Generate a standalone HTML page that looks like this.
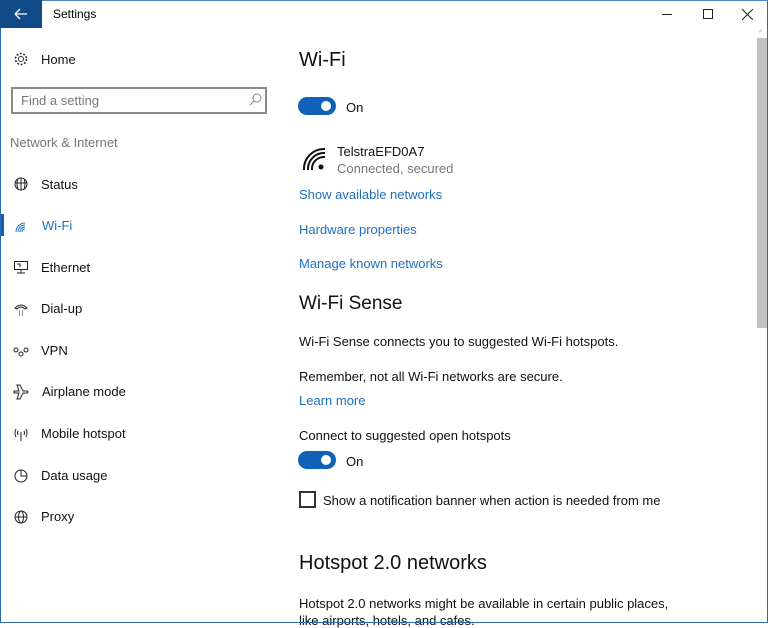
<!DOCTYPE html><html><head><style>
*{margin:0;padding:0;box-sizing:border-box}
body{width:768px;height:623px;overflow:hidden;background:#fff;font-family:"Liberation Sans",sans-serif;color:#000;position:relative}
.a{position:absolute;white-space:nowrap}
.nav{font-size:13px;color:#111}
.ic{position:absolute;left:13px;width:16px;height:16px}
.lnk{color:#1f6fbf;font-size:13px}
.t{font-size:13px;color:#111}
.tg{position:absolute;width:38px;height:18px;border-radius:9px;background:#0f62b8}
.tg:after{content:"";position:absolute;right:5px;top:4px;width:10px;height:10px;border-radius:50%;background:#fff}
</style></head><body>
<div class="a" style="left:0;top:0;width:1px;height:623px;background:#2b6cb0"></div>
<div class="a" style="right:0;top:0;width:1px;height:623px;background:#2b6cb0"></div>
<div class="a" style="left:0;bottom:0;width:768px;height:1px;background:#2b6cb0"></div>
<div class="a" style="left:0;top:0;width:768px;height:1px;background:#4a86c8"></div>
<div class="a" style="left:0;top:0;width:42px;height:28px;background:#104a87"></div>
<svg class="a" style="left:14px;top:8px" width="14" height="12"><path d="M1 6H13M1 6L6 1M1 6L6 11" stroke="#fff" stroke-width="1.3" fill="none"/></svg>
<div class="a" style="left:53px;top:7px;font-size:12px">Settings</div>
<div class="a" style="left:662px;top:14px;width:10px;height:1px;background:#222"></div>
<div class="a" style="left:703px;top:9px;width:10px;height:10px;border:1px solid #222"></div>
<svg class="a" style="left:742px;top:9px" width="11" height="11"><path d="M0 0L11 11M11 0L0 11" stroke="#222" stroke-width="1"/></svg>
<div class="a" style="left:757px;top:38px;width:10px;height:290px;background:#c2c2c2"></div>
<div class="a" style="left:759px;top:30px;font-size:7px;color:#999">^</div>

<svg class="ic" style="top:51px" viewBox="0 0 16 16"><circle cx="8" cy="8" r="2.5" fill="none" stroke="#333"/><circle cx="8" cy="8" r="5.5" fill="none" stroke="#333" stroke-dasharray="2 1.5" stroke-width="1.6"/></svg>
<div class="a nav" style="left:41px;top:52px">Home</div>
<div class="a" style="left:11px;top:87px;width:256px;height:27px;border:2px solid #8a8a8a"></div>
<div class="a" style="left:21px;top:93px;font-size:13px;color:#777">Find a setting</div>
<svg class="a" style="left:249px;top:93px" width="13" height="13"><circle cx="8" cy="5" r="4" fill="none" stroke="#888"/><path d="M5 8L1 12" stroke="#888"/></svg>
<div class="a" style="left:10px;top:135px;font-size:13px;color:#767676">Network &amp; Internet</div>

<svg class="ic" style="top:176px" viewBox="0 0 16 16"><circle cx="8" cy="8" r="6" fill="none" stroke="#222"/><path d="M2 7H14M8 2V14M5 3Q3 8 5 13M11 3Q13 8 11 13" stroke="#222" fill="none"/></svg>
<div class="a nav" style="left:41px;top:177px">Status</div>
<div class="a" style="left:1px;top:214px;width:3px;height:22px;background:#0f62b8"></div>
<svg class="ic" style="top:218px" viewBox="0 0 16 16"><path d="M3 14A9 9 0 0 1 12 5M5 14A7 7 0 0 1 12 7M7 14A5 5 0 0 1 12 9M9 14A3 3 0 0 1 12 11" stroke="#1f6fbf" fill="none"/></svg>
<div class="a nav" style="left:42px;top:218px;color:#1f6fbf">Wi-Fi</div>
<svg class="ic" style="top:259px" viewBox="0 0 16 16"><rect x="1.5" y="2.5" width="13" height="8" fill="none" stroke="#222"/><path d="M4 5H7V8M8 11V14M4 14H12" stroke="#222" fill="none"/></svg>
<div class="a nav" style="left:41px;top:260px">Ethernet</div>
<svg class="ic" style="top:301px" viewBox="0 0 16 16"><path d="M2 7Q8 1 14 7L12 8Q8 4 4 8Z" fill="none" stroke="#222"/><path d="M6 10h1M9 10h1M6 12h1M9 12h1M6 14h1M9 14h1" stroke="#222"/></svg>
<div class="a nav" style="left:41px;top:301px">Dial-up</div>
<svg class="ic" style="top:343px" viewBox="0 0 16 16"><circle cx="3" cy="7" r="2" fill="none" stroke="#222"/><circle cx="8" cy="11" r="2" fill="none" stroke="#222"/><circle cx="13" cy="7" r="2" fill="none" stroke="#222"/></svg>
<div class="a nav" style="left:41px;top:343px">VPN</div>
<svg class="ic" style="top:384px" viewBox="0 0 16 16"><path d="M1 7H6L4 1H7L10 7H14Q16 8 14 9H10L7 15H4L6 9H1Z" fill="none" stroke="#222"/></svg>
<div class="a nav" style="left:42px;top:384px">Airplane mode</div>
<svg class="ic" style="top:426px" viewBox="0 0 16 16"><path d="M8 6V15M3 3Q1 7 3 11M13 3Q15 7 13 11M5 5Q4 7 5 9M11 5Q12 7 11 9" stroke="#222" fill="none"/></svg>
<div class="a nav" style="left:41px;top:426px">Mobile hotspot</div>
<svg class="ic" style="top:467px" viewBox="0 0 16 16"><circle cx="8" cy="9" r="6" fill="none" stroke="#222"/><path d="M8 3V9H14" stroke="#222" fill="none"/></svg>
<div class="a nav" style="left:41px;top:468px">Data usage</div>
<svg class="ic" style="top:509px" viewBox="0 0 16 16"><circle cx="8" cy="8" r="6" fill="none" stroke="#222"/><ellipse cx="8" cy="8" rx="2.5" ry="6" fill="none" stroke="#222"/><path d="M2 8H14" stroke="#222"/></svg>
<div class="a nav" style="left:41px;top:509px">Proxy</div>

<div class="a" style="left:299px;top:49px;font-size:20px;color:#111">Wi-Fi</div>
<div class="tg" style="left:298px;top:97px"></div>
<div class="a t" style="left:346px;top:100px">On</div>
<svg class="a" style="left:301px;top:146px" width="26" height="26" viewBox="0 0 26 26"><path d="M3 24A20 20 0 0 1 24 3M7 24A16 16 0 0 1 24 7M11 24A12 12 0 0 1 24 11" stroke="#111" stroke-width="2" fill="none"/><circle cx="20" cy="21" r="2.5" fill="#111"/></svg>
<div class="a t" style="left:337px;top:144px">TelstraEFD0A7</div>
<div class="a" style="left:337px;top:161px;font-size:13px;color:#777">Connected, secured</div>
<div class="a lnk" style="left:299px;top:187px">Show available networks</div>
<div class="a lnk" style="left:299px;top:222px">Hardware properties</div>
<div class="a lnk" style="left:299px;top:256px">Manage known networks</div>
<div class="a" style="left:299px;top:293px;font-size:19px;color:#111">Wi-Fi Sense</div>
<div class="a t" style="left:299px;top:334px">Wi-Fi Sense connects you to suggested Wi-Fi hotspots.</div>
<div class="a t" style="left:299px;top:369px">Remember, not all Wi-Fi networks are secure.</div>
<div class="a lnk" style="left:299px;top:393px">Learn more</div>
<div class="a t" style="left:299px;top:428px">Connect to suggested open hotspots</div>
<div class="tg" style="left:298px;top:451px"></div>
<div class="a t" style="left:346px;top:454px">On</div>
<div class="a" style="left:299px;top:491px;width:17px;height:17px;border:2px solid #333"></div>
<div class="a t" style="left:323px;top:493px">Show a notification banner when action is needed from me</div>
<div class="a" style="left:299px;top:552px;font-size:20px;color:#111">Hotspot 2.0 networks</div>
<div class="a t" style="left:299px;top:596px">Hotspot 2.0 networks might be available in certain public places,</div>
<div class="a t" style="left:299px;top:613px">like airports, hotels, and cafes.</div>
<div class="a" style="left:0;bottom:0;width:768px;height:1px;background:#2b6cb0"></div>
</body></html>
